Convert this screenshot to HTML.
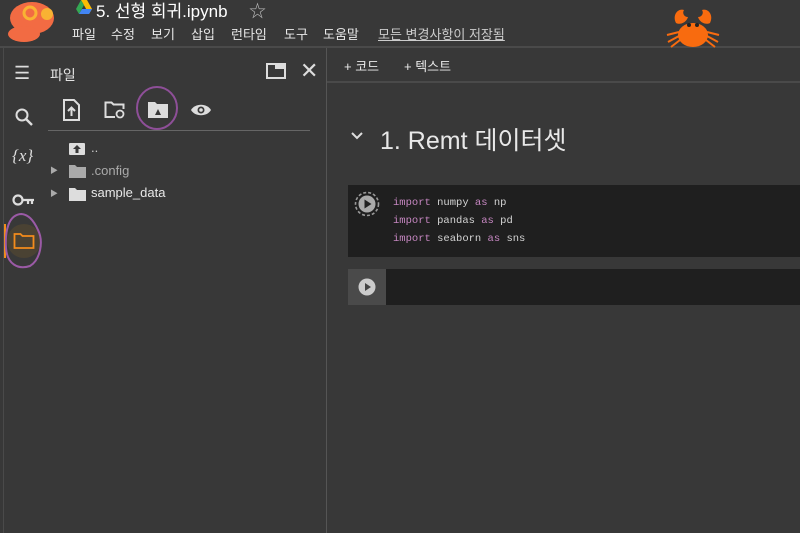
<!DOCTYPE html>
<html><head><meta charset="utf-8"><style>
*{margin:0;padding:0;box-sizing:border-box}
body{width:800px;height:533px;background:#383838;position:relative;overflow:hidden;font-family:"Liberation Sans","Noto Sans CJK KR",sans-serif;color:#e3e3e3}
.a{position:absolute}
.m{position:absolute;top:24px;font-size:13px;color:#e8e8e8}
.mono{font-family:"Liberation Mono","Noto Sans CJK KR",monospace;font-size:10.5px;line-height:18px;color:#d4d4d4}
.k{color:#c586c0}
</style></head><body>
<div class="a" style="left:0;top:46px;width:800px;height:2px;background:#4a4a4a"></div>
<div class="a" style="left:327px;top:81px;width:473px;height:2px;background:#4a4a4a"></div>
<div class="a" style="left:326px;top:48px;width:1px;height:485px;background:#555"></div>
<div class="a" style="left:3px;top:48px;width:1px;height:485px;background:#4a4a4a"></div>
<!-- mascot -->
<svg class="a" style="left:2px;top:0" width="66" height="46"><ellipse cx="30" cy="18" rx="22" ry="16" fill="#f26b43"/><ellipse cx="22" cy="34" rx="16" ry="8" fill="#f26b43"/><circle cx="45" cy="14" r="6" fill="#f9b233"/><circle cx="28" cy="13" r="6" fill="none" stroke="#f9b233" stroke-width="3"/></svg>
<!-- title -->
<svg class="a" style="left:76px;top:0" width="16" height="14"><polygon points="5,0 11,0 16,9 13,14" fill="#fbbc04"/><polygon points="5,0 0,9 3,14 8,5" fill="#34a853"/><polygon points="3,14 13,14 16,9 6,9" fill="#4285f4"/></svg>
<div class="a" style="left:96px;top:-3px;font-size:17px;color:#fff">5. 선형 회귀.ipynb</div>
<div class="a" style="left:249px;top:-3px;font-size:17px;color:#bbb">☆</div>
<div class="m" style="left:72px">파일</div><div class="m" style="left:111px">수정</div><div class="m" style="left:151px">보기</div><div class="m" style="left:191px">삽입</div><div class="m" style="left:231px">런타임</div><div class="m" style="left:284px">도구</div><div class="m" style="left:323px">도움말</div>
<div class="a" style="left:378px;top:24px;font-size:13px;color:#ccc;text-decoration:underline">모든 변경사항이 저장됨</div>
<!-- crab -->
<svg class="a" style="left:664px;top:5px" width="60" height="44"><ellipse cx="29" cy="30" rx="15" ry="12" fill="#f86b0f"/><path d="M12 18C8 10 14 3 20 5 18 8 20 12 24 12 22 18 16 20 12 18z" fill="#f86b0f"/><path d="M46 18C50 10 44 3 38 5 40 8 38 12 34 12 36 18 42 20 46 18z" fill="#f86b0f"/><g stroke="#f86b0f" stroke-width="2" fill="none"><path d="M15 27L3 30M15 31L4 37M16 35L7 42M43 27L55 30M43 31L54 37M42 35L51 42"/></g><circle cx="25" cy="20" r="2" fill="#222"/><circle cx="33" cy="20" r="2" fill="#222"/></svg>
<!-- sidebar icons -->
<div class="a" style="left:14px;top:63px;font-size:18px;color:#ddd">☰</div>
<svg class="a" style="left:14px;top:107px" width="20" height="20"><circle cx="8" cy="8" r="5.5" fill="none" stroke="#ddd" stroke-width="2"/><line x1="12" y1="12" x2="18" y2="18" stroke="#ddd" stroke-width="2.4"/></svg>
<div class="a" style="left:12px;top:146px;font-family:'Liberation Serif',serif;font-style:italic;font-size:17px;color:#ddd">{<i>x</i>}</div>
<svg class="a" style="left:12px;top:193px" width="24" height="14"><circle cx="6" cy="7" r="4.5" fill="none" stroke="#ddd" stroke-width="2.2"/><path d="M10 7H22M16 7v4M20 7v4" stroke="#ddd" stroke-width="2.2"/></svg>
<div class="a" style="left:7px;top:224px;width:34px;height:34px;border-radius:50%;background:#4a4233"></div>
<div class="a" style="left:4px;top:224px;width:2px;height:34px;background:#f38c1c"></div>
<svg class="a" style="left:13px;top:232px" width="22" height="18"><path d="M1.5 2h6l2 2h11v12h-19z" fill="none" stroke="#f38c1c" stroke-width="1.8"/></svg>
<svg class="a" style="left:2px;top:212px" width="44" height="60"><path d="M20 2C6 2 3 20 4 36 5 52 16 58 28 54 38 48 42 30 36 18 31 7 26 3 20 2" fill="none" stroke="#9b5aa6" stroke-width="2"/></svg>
<!-- panel -->
<div class="a" style="left:50px;top:65px;font-size:14px">파일</div>
<svg class="a" style="left:266px;top:63px" width="20" height="16"><rect x="1" y="1" width="18" height="14" fill="none" stroke="#ddd" stroke-width="2"/><rect x="9" y="1" width="10" height="5" fill="#ddd"/></svg>
<div class="a" style="left:300px;top:58px;font-size:22px;color:#ddd">✕</div>
<svg class="a" style="left:62px;top:99px" width="20" height="22"><path d="M2 1h10l5 5v15H2z" fill="none" stroke="#ddd" stroke-width="2"/><path d="M9.5 17V9M6 12l3.5-3.5L13 12" stroke="#ddd" stroke-width="2" fill="none"/></svg>
<svg class="a" style="left:104px;top:101px" width="22" height="18"><path d="M11 16H1.5V1.5h6l2 2h10V8" fill="none" stroke="#ddd" stroke-width="2"/><circle cx="16" cy="13" r="3.5" fill="none" stroke="#ddd" stroke-width="1.8"/></svg>
<svg class="a" style="left:147px;top:101px" width="22" height="18"><path d="M1 1h7l2 2h11v14H1z" fill="#ddd"/><path d="M8 14l3-6 3 6z" fill="#383838"/></svg>
<svg class="a" style="left:134px;top:84px" width="46" height="48"><ellipse cx="23" cy="24" rx="20" ry="21" fill="none" stroke="#8e4f98" stroke-width="2"/></svg>
<svg class="a" style="left:190px;top:103px" width="22" height="14"><path d="M1 7C5 0 17 0 21 7 17 14 5 14 1 7z" fill="#ddd"/><circle cx="11" cy="7" r="3.5" fill="#383838"/><circle cx="11" cy="7" r="1.8" fill="#ddd"/></svg>
<div class="a" style="left:48px;top:130px;width:262px;height:1px;background:#666"></div>
<svg class="a" style="left:69px;top:143px" width="16" height="12"><rect width="16" height="12" rx="1" fill="#ddd"/><path d="M8 2l4 4H9.5v4h-3V6H4z" fill="#383838"/></svg>
<div class="a" style="left:91px;top:140px;font-size:13px;color:#ccc">..</div>
<div class="a" style="left:50px;top:165px;font-size:8px;color:#aaa">▶</div>
<svg class="a" style="left:69px;top:165px" width="17" height="13"><path d="M0 0h6l2 2h9v11H0z" fill="#aaa"/></svg>
<div class="a" style="left:91px;top:163px;font-size:13px;color:#aaa">.config</div>
<div class="a" style="left:50px;top:188px;font-size:8px;color:#aaa">▶</div>
<svg class="a" style="left:69px;top:188px" width="17" height="13"><path d="M0 0h6l2 2h9v11H0z" fill="#ddd"/></svg>
<div class="a" style="left:91px;top:185px;font-size:13px;color:#e8e8e8">sample_data</div>
<!-- toolbar -->
<div class="a" style="left:344px;top:56px;font-size:13px;color:#e8e8e8">+ 코드</div>
<div class="a" style="left:404px;top:56px;font-size:13px;color:#e8e8e8">+ 텍스트</div>
<!-- heading -->
<svg class="a" style="left:351px;top:132px" width="12" height="8"><path d="M1 1l5 5 5-5" fill="none" stroke="#ddd" stroke-width="2"/></svg>
<div class="a" style="left:380px;top:121px;font-size:25px;color:#e8e8e8">1. Remt 데이터셋</div>
<!-- cell -->
<div class="a" style="left:348px;top:185px;width:452px;height:72px;background:#1f1f1f"></div>
<svg class="a" style="left:354px;top:191px" width="26" height="26"><circle cx="13" cy="13" r="11.5" fill="none" stroke="#999" stroke-width="1.6" stroke-dasharray="3 2"/><circle cx="13" cy="13" r="8.5" fill="#aaa"/><path d="M10.5 8.5v9l7-4.5z" fill="#222"/></svg>
<div class="a mono" style="left:393px;top:194px"><span class="k">import</span> numpy <span class="k">as</span> np<br><span class="k">import</span> pandas <span class="k">as</span> pd<br><span class="k">import</span> seaborn <span class="k">as</span> sns</div>
<div class="a" style="left:348px;top:269px;width:452px;height:36px;background:#1f1f1f"></div>
<div class="a" style="left:348px;top:269px;width:38px;height:36px;background:#4a4a4a"></div>
<svg class="a" style="left:358px;top:278px" width="18" height="18"><circle cx="9" cy="9" r="8.5" fill="#ccc"/><path d="M7 5v8l6-4z" fill="#444"/></svg>
</body></html>
